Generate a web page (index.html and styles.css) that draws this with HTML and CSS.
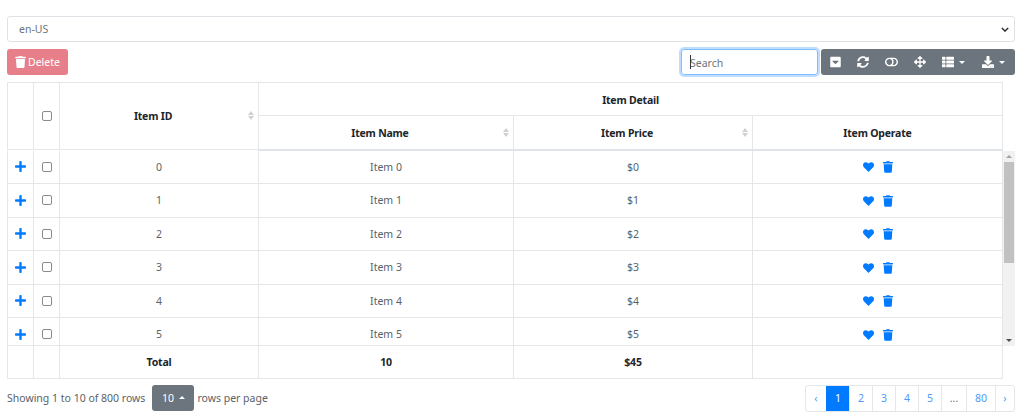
FILE: index.html
```html
<!DOCTYPE html>
<html lang="en">
<head>
<meta charset="utf-8">
<title>Table</title>
<link rel="stylesheet" href="styles.css">
</head>
<body>
<svg class="sprites" aria-hidden="true">
<symbol id="i-trash" viewBox="0 0 448 512"><path d="M432 32H312l-9.4-18.7A24 24 0 0 0 281.1 0H166.8a23.72 23.72 0 0 0-21.4 13.3L136 32H16A16 16 0 0 0 0 48v32a16 16 0 0 0 16 16h416a16 16 0 0 0 16-16V48a16 16 0 0 0-16-16zM53.2 467a48 48 0 0 0 47.9 45h245.8a48 48 0 0 0 47.9-45L416 128H32z"/></symbol>
<symbol id="i-heart" viewBox="0 0 512 512"><path d="M462.3 62.6C407.5 15.9 326 24.3 275.7 76.2L256 96.5l-19.7-20.3C186.1 24.3 104.5 15.9 49.7 62.6c-62.8 53.6-66.1 149.8-9.9 207.9l193.5 199.8c12.5 12.9 32.8 12.9 45.3 0l193.5-199.8c56.3-58.1 53-154.3-9.8-207.9z"/></symbol>
<symbol id="i-plus" viewBox="0 0 448 512"><path d="M416 208H272V64c0-17.67-14.33-32-32-32h-32c-17.67 0-32 14.33-32 32v144H32c-17.67 0-32 14.33-32 32v32c0 17.67 14.33 32 32 32h144v144c0 17.67 14.33 32 32 32h32c17.67 0 32-14.33 32-32V304h144c17.67 0 32-14.33 32-32v-32c0-17.67-14.33-32-32-32z"/></symbol>
<symbol id="i-caret" viewBox="0 0 448 512"><path d="M448 80v352c0 26.5-21.5 48-48 48H48c-26.5 0-48-21.5-48-48V80c0-26.5 21.5-48 48-48h352c26.5 0 48 21.5 48 48zM92.5 220.5l123 123c4.7 4.7 12.3 4.7 17 0l123-123c7.6-7.6 2.2-20.5-8.5-20.5H101c-10.7 0-16.1 12.9-8.5 20.5z"/></symbol>
<symbol id="i-sync" viewBox="0 0 512 512"><path d="M370.72 133.28C339.458 104.008 298.888 87.962 255.848 88c-77.458.068-144.328 53.178-162.791 126.85-1.344 5.363-6.122 9.15-11.651 9.15H24.103c-7.498 0-13.194-6.807-11.807-14.176C33.933 94.924 134.813 8 256 8c66.448 0 126.791 26.136 171.315 68.685L463.03 40.97C478.149 25.851 504 36.559 504 57.941V192c0 13.255-10.745 24-24 24H345.941c-21.382 0-32.09-25.851-16.971-40.971l41.75-41.749zM32 296h134.059c21.382 0 32.09 25.851 16.971 40.971l-41.75 41.75c31.262 29.273 71.835 45.319 114.876 45.28 77.418-.07 144.315-53.144 162.787-126.849 1.344-5.363 6.122-9.15 11.651-9.15h57.304c7.498 0 13.194 6.807 11.807 14.176C478.067 417.076 377.187 504 256 504c-66.448 0-126.791-26.136-171.315-68.685L48.97 471.03C33.851 486.149 8 475.441 8 454.059V320c0-13.255 10.745-24 24-24z"/></symbol>
<symbol id="i-toggle" viewBox="0 0 576 512"><path d="M384 64H192C86 64 0 150 0 256s86 192 192 192h192c106 0 192-86 192-192S490 64 384 64zM64 256c0-70.8 57.3-128 128-128 70.8 0 128 57.3 128 128 0 70.8-57.3 128-128 128-70.8 0-128-57.3-128-128zm320 128h-48.9c65.2-72.8 65.1-183.3 0-256H384c70.8 0 128 57.3 128 128 0 70.8-57.3 128-128 128z"/></symbol>
<symbol id="i-arrows" viewBox="0 0 512 512"><path d="M352.201 425.775l-79.196 79.196c-9.373 9.373-24.568 9.373-33.941 0l-79.196-79.196c-15.119-15.119-4.411-40.971 16.971-40.97h51.162L228 284H127.196v51.162c0 21.382-25.851 32.09-40.971 16.971L7.029 272.937c-9.373-9.373-9.373-24.569 0-33.941L86.225 159.8c15.119-15.119 40.971-4.411 40.971 16.971V228H228V127.196h-51.23c-21.382 0-32.09-25.851-16.971-40.971l79.196-79.196c9.373-9.373 24.568-9.373 33.941 0l79.196 79.196c15.119 15.119 4.411 40.971-16.971 40.971h-51.162V228h100.804v-51.162c0-21.382 25.851-32.09 40.97-16.971l79.196 79.196c9.373 9.373 9.373 24.569 0 33.941L425.773 352.2c-15.119 15.119-40.971 4.411-40.97-16.971V284H284v100.804h51.23c21.382 0 32.09 25.851 16.971 40.971z"/></symbol>
<symbol id="i-list" viewBox="0 0 512 512"><path d="M149.333 216v80c0 13.255-10.745 24-24 24H24c-13.255 0-24-10.745-24-24v-80c0-13.255 10.745-24 24-24h101.333c13.255 0 24 10.745 24 24zM0 376v80c0 13.255 10.745 24 24 24h101.333c13.255 0 24-10.745 24-24v-80c0-13.255-10.745-24-24-24H24c-13.255 0-24 10.745-24 24zM125.333 32H24C10.745 32 0 42.745 0 56v80c0 13.255 10.745 24 24 24h101.333c13.255 0 24-10.745 24-24V56c0-13.255-10.745-24-24-24zm80 448H488c13.255 0 24-10.745 24-24v-80c0-13.255-10.745-24-24-24H205.333c-13.255 0-24 10.745-24 24v80c0 13.255 10.745 24 24 24zm-24-424v80c0 13.255 10.745 24 24 24H488c13.255 0 24-10.745 24-24V56c0-13.255-10.745-24-24-24H205.333c-13.255 0-24 10.745-24 24zm24 264H488c13.255 0 24-10.745 24-24v-80c0-13.255-10.745-24-24-24H205.333c-13.255 0-24 10.745-24 24v80c0 13.255 10.745 24 24 24z"/></symbol>
<symbol id="i-download" viewBox="0 0 512 512"><path d="M216 0h80c13.3 0 24 10.7 24 24v168h87.7c17.8 0 26.7 21.5 14.1 34.1L269.7 378.3c-7.5 7.5-19.8 7.5-27.3 0L90.1 226.1c-12.6-12.6-3.7-34.1 14.1-34.1H192V24c0-13.3 10.7-24 24-24zm296 376v112c0 13.3-10.7 24-24 24H24c-13.3 0-24-10.7-24-24V376c0-13.3 10.7-24 24-24h146.7l49 49c20.1 20.1 52.5 20.1 72.6 0l49-49H488c13.3 0 24 10.7 24 24zm-124 88c0-11-9-20-20-20s-20 9-20 20 9 20 20 20 20-9 20-20zm64 0c0-11-9-20-20-20s-20 9-20 20 9 20 20 20 20-9 20-20z"/></symbol>
</svg>
<div class="page">
  <div class="select"><span>en-US</span><svg class="chev" viewBox="0 0 10 6"><path d="M1 1l4 4 4-4" fill="none" stroke="#333" stroke-width="1.8"/></svg></div>
  <div class="toolbar">
    <button class="btn-delete"><svg class="ic"><use href="#i-trash"/></svg>Delete</button>
    <div class="tools">
      <div class="search"><span class="cursor"></span>Search</div>
      <div class="btn-group">
        <svg class="ic ic-first"><use href="#i-caret"/></svg>
        <svg class="ic"><use href="#i-sync"/></svg>
        <svg class="ic ic-wide"><use href="#i-toggle"/></svg>
        <svg class="ic"><use href="#i-arrows"/></svg>
        <span class="dd"><svg class="ic"><use href="#i-list"/></svg><i class="caret"></i></span>
        <span class="dd dd-last"><svg class="ic"><use href="#i-download"/></svg><i class="caret"></i></span>
      </div>
    </div>
  </div>
  <div class="grid-wrap">
    <table class="tbl head">
      <colgroup><col class="c1"><col class="c2"><col class="c3"><col class="c4"><col class="c5"><col></colgroup>
      <tr class="h1">
        <th rowspan="2"></th>
        <th rowspan="2"><span class="check"></span></th>
        <th rowspan="2" class="sortable">Item ID<span class="sort"></span></th>
        <th colspan="3" class="low">Item Detail</th>
      </tr>
      <tr class="h2">
        <th class="sortable low">Item Name<span class="sort"></span></th>
        <th class="sortable low">Item Price<span class="sort"></span></th>
        <th class="low">Item Operate</th>
      </tr>
    </table>
    <div class="body-wrap">
      <div class="body-view">
        <table class="tbl body">
          <colgroup><col class="c1"><col class="c2"><col class="c3"><col class="c4"><col class="c5"><col></colgroup>
          <tr><td><svg class="plus"><use href="#i-plus"/></svg></td><td><span class="check"></span></td><td>0</td><td>Item 0</td><td>$0</td><td class="ops"><svg class="heart"><use href="#i-heart"/></svg><svg class="trash"><use href="#i-trash"/></svg></td></tr>
          <tr><td><svg class="plus"><use href="#i-plus"/></svg></td><td><span class="check"></span></td><td>1</td><td>Item 1</td><td>$1</td><td class="ops"><svg class="heart"><use href="#i-heart"/></svg><svg class="trash"><use href="#i-trash"/></svg></td></tr>
          <tr><td><svg class="plus"><use href="#i-plus"/></svg></td><td><span class="check"></span></td><td>2</td><td>Item 2</td><td>$2</td><td class="ops"><svg class="heart"><use href="#i-heart"/></svg><svg class="trash"><use href="#i-trash"/></svg></td></tr>
          <tr><td><svg class="plus"><use href="#i-plus"/></svg></td><td><span class="check"></span></td><td>3</td><td>Item 3</td><td>$3</td><td class="ops"><svg class="heart"><use href="#i-heart"/></svg><svg class="trash"><use href="#i-trash"/></svg></td></tr>
          <tr><td><svg class="plus"><use href="#i-plus"/></svg></td><td><span class="check"></span></td><td>4</td><td>Item 4</td><td>$4</td><td class="ops"><svg class="heart"><use href="#i-heart"/></svg><svg class="trash"><use href="#i-trash"/></svg></td></tr>
          <tr><td><svg class="plus"><use href="#i-plus"/></svg></td><td><span class="check"></span></td><td>5</td><td>Item 5</td><td>$5</td><td class="ops"><svg class="heart"><use href="#i-heart"/></svg><svg class="trash"><use href="#i-trash"/></svg></td></tr>
        </table>
      </div>
      <div class="scrollbar">
        <span class="arrow up"></span>
        <div class="track"><div class="thumb"></div></div>
        <span class="arrow down"></span>
      </div>
    </div>
    <table class="tbl foot">
      <colgroup><col class="c1"><col class="c2"><col class="c3"><col class="c4"><col class="c5"><col></colgroup>
      <tr><th></th><th></th><th>Total</th><th>10</th><th>$45</th><th></th></tr>
    </table>
  </div>
  <div class="pager-row">
    <div class="info">
      <span>Showing 1 to 10 of 800 rows</span>
      <span class="size">10<i class="caret up"></i></span>
      <span>rows per page</span>
    </div>
    <ul class="pager">
      <li class="nav">‹</li><li class="on">1</li><li>2</li><li>3</li><li>4</li><li>5</li><li class="dots">...</li><li class="last">80</li><li class="nav">›</li>
    </ul>
  </div>
</div>
</body>
</html>
```
FILE: styles.css
```css
* { box-sizing: border-box; }
html, body { margin: 0; padding: 0; }
body { background: #fff; color: #5a6268; font-family: "Noto Sans", "Open Sans", sans-serif; font-size: 10.5px; overflow: hidden; }
.sprites { display: none; }
.page { padding: 16px 9px 0 7px; width: 1024px; }

.select { height: 26px; border: 1px solid #dfe3e7; border-radius: 3px; display: flex; align-items: center; justify-content: space-between; padding: 0 5px 0 11px; color: #6c757d; }
.chev { width: 8px; height: 5px; }

.toolbar { display: flex; justify-content: space-between; margin-top: 7px; height: 26px; }
.btn-delete { background: #e77f8a; border: 0; border-radius: 3px; color: #fff; font: inherit; width: 61px; height: 26px; padding: 0; display: flex; align-items: center; justify-content: center; gap: 2px; }
.ic { width: 12px; height: 12px; fill: #fff; flex: none; }
.btn-delete .ic { width: 11px; }
.ic-first { width: 11px; }
.ic-wide { width: 13px; }
.tools { display: flex; gap: 3px; }
.search { width: 137px; height: 26px; border: 1px solid #80bdff; border-radius: 3px; box-shadow: 0 0 0 2px #bfdeff; color: #6c757d; padding-left: 8px; line-height: 26px; position: relative; }
.cursor { position: absolute; left: 8px; top: 5px; width: 1px; height: 14px; background: #333; }
.btn-group { background: #6c757d; border-radius: 3px; width: 194px; height: 26px; display: flex; align-items: center; gap: 16px; padding: 0 9px; }
.dd { display: flex; align-items: center; gap: 5px; }
.dd-last { margin-left: 1px; }
.caret { display: block; width: 0; height: 0; border: 3.5px solid transparent; border-top-color: #fff; border-bottom: 0; }
.caret.up { border-top: 0; border-bottom: 3.5px solid #fff; }

.grid-wrap { margin-top: 7px; width: 1009px; }
.tbl { table-layout: fixed; border-collapse: collapse; width: 996px; color: #5a6268; }
.c1 { width: 26px; }
.c2 { width: 26px; }
.c3 { width: 199px; }
.c4 { width: 255px; }
.c5 { width: 239px; }
.tbl th, .tbl td { border: 1px solid #e4e7ea; padding: 0; text-align: center; vertical-align: middle; position: relative; }
.tbl th { color: #212529; font-weight: 700; letter-spacing: -0.2px; }
.tbl .sortable { padding-right: 12px; }
.tbl .low { padding-top: 2px; }
.h1 th { height: 33px; }
.h2 th { height: 34px; border-bottom: 2px solid #e0e3e7; }
.head { border-top: 1px solid #e4e7ea; }
.body-wrap { display: flex; height: 195px; }
.body-view { width: 996px; height: 195px; overflow: hidden; flex: none; }
.body { margin-top: -1px; }
.body td { height: 33.5px; }
.foot th { height: 33px; }
.foot { margin-top: -1px; position: relative; }

.check { display: block; width: 10px; height: 10px; margin: 0 auto; border: 1px solid #8a8a8a; border-radius: 2px; background: #fff; }
.plus { width: 11px; height: 13px; fill: #007bff; display: block; margin: 0 auto; }
.ops svg { vertical-align: middle; fill: #007bff; margin-bottom: 1px; }
.heart { width: 11px; height: 12px; margin-right: 9px; }
.trash { width: 10px; height: 12px; }

.sort { position: absolute; right: 4px; top: 50%; margin-top: -5px; width: 6px; height: 9px; }
.low .sort { margin-top: -4px; }
.sort::before, .sort::after { content: ""; position: absolute; left: 0; border: 3px solid transparent; }
.sort::before { top: 0; border-top: 0; border-bottom: 4px solid #cdd1d4; }
.sort::after { bottom: 0; border-bottom: 0; border-top: 4px solid #cdd1d4; }
.scrollbar { width: 12px; height: 195px; background: #f1f1f1; display: flex; flex-direction: column; }
.arrow { height: 11px; flex: none; position: relative; }
.arrow::after { content: ""; position: absolute; left: 3px; top: 4px; border: 3px solid transparent; }
.arrow.up::after { border-top: 0; border-bottom: 3px solid #a3a3a3; }
.arrow.down::after { border-bottom: 0; border-top: 3px solid #505050; }
.track { flex: 1; padding: 0 1px; }
.thumb { height: 101px; background: #c1c1c1; }

.pager-row { display: flex; justify-content: space-between; margin-top: 6px; width: 1008px; }
.info { display: flex; align-items: center; height: 26px; }
.size { background: #6c757d; color: #fff; width: 42px; height: 26px; border-radius: 3px; display: flex; align-items: center; justify-content: center; gap: 5px; margin: 0 3px 0 7px; }
.pager { list-style: none; margin: 0; padding: 0; display: flex; height: 27px; border: 1px solid #e4e7ea; border-radius: 3px; color: #4d9aff; }
.pager li { width: 23px; display: flex; align-items: center; justify-content: center; border-left: 1px solid #e4e7ea; }
.pager li:first-child { border-left: 0; width: 20px; }
.pager .on { background: #007bff; color: #fff; border-left-color: #007bff; }
.pager .dots { width: 25px; color: #6c757d; }
.pager .last { width: 29px; }
.pager .nav:last-child { width: 19px; }
```
